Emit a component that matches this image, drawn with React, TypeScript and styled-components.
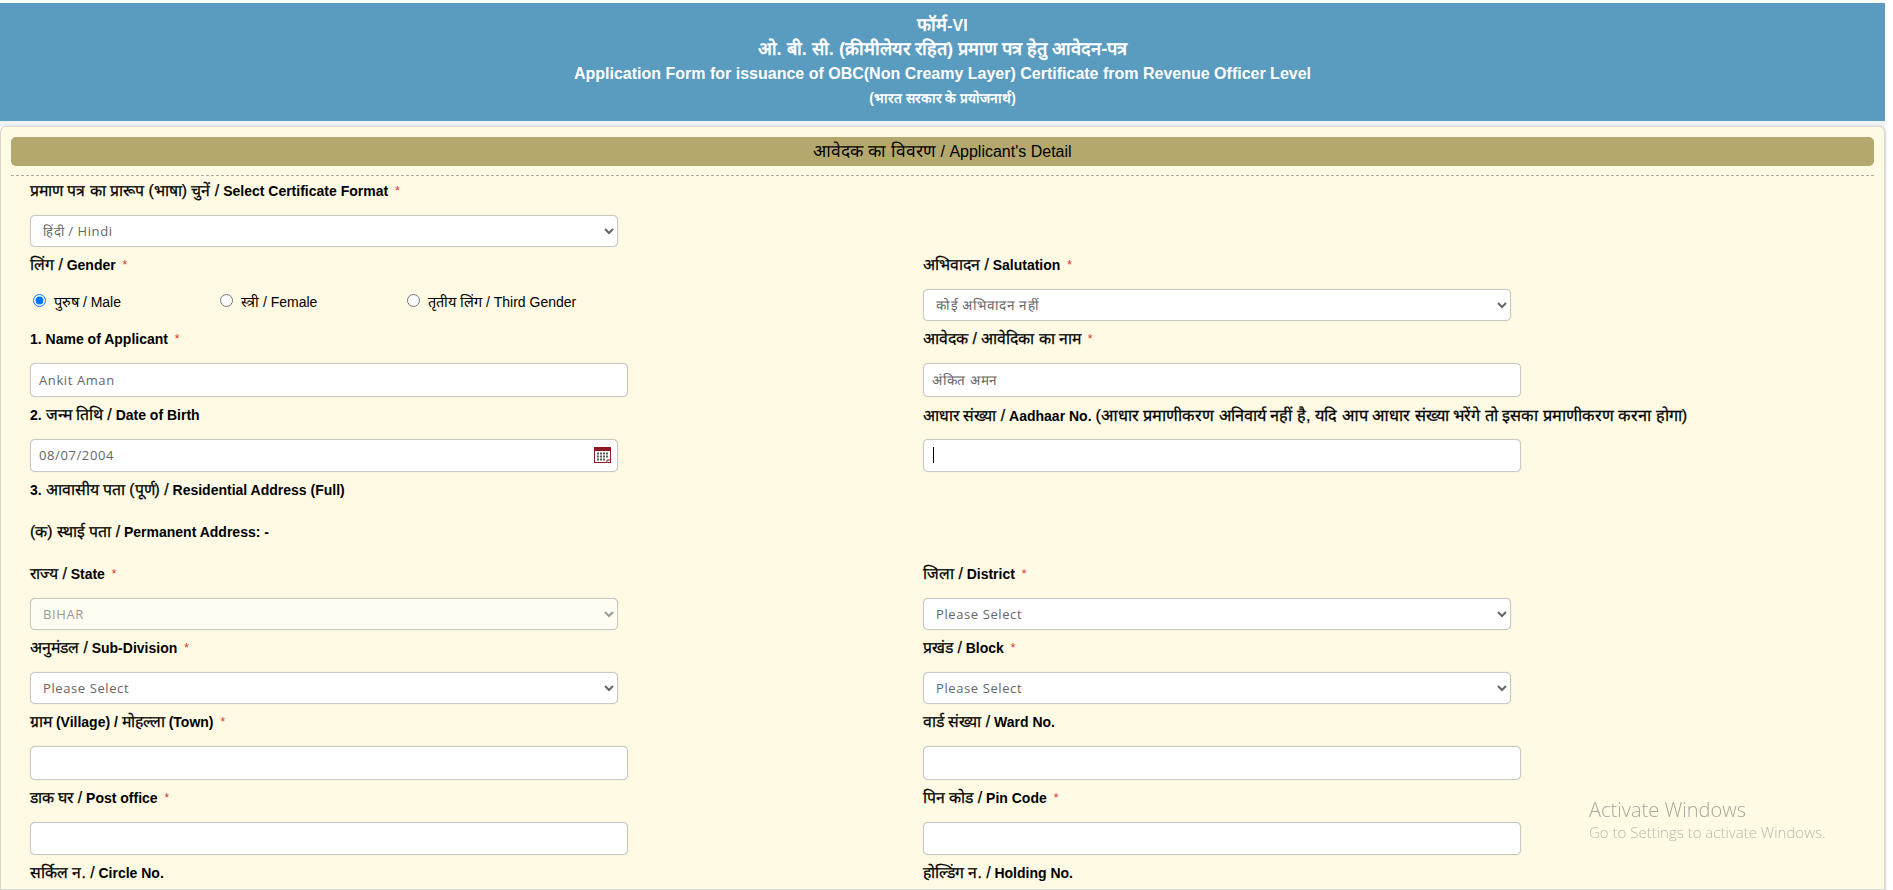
import React from 'react';
import styled, { createGlobalStyle } from 'styled-components';

const GlobalStyle = createGlobalStyle`
  html, body {
    margin: 0;
    height: 100%;
    overflow: hidden;
    background: #fff;
    font-family: "Liberation Sans", Arial, sans-serif;
    color: #000;
  }
`;

const Page = styled.div`
  width: 1885px;
  height: 890px;
  padding-top: 3px;
  box-sizing: border-box;
`;

const Header = styled.header`
  height: 118px;
  padding-top: 10px;
  box-sizing: border-box;
  background: #5a9bc0;
  color: #fff;
  text-align: center;
  font-weight: bold;
`;

const HeaderLine = styled.div`
  height: 24.4px;
  line-height: 24.4px;
  font-size: 16px;
`;

const HeaderHindi = styled.span<{ $small?: boolean }>`
  font-size: ${({ $small }) => ($small ? '13.8px' : '18.2px')};
`;

const Band = styled.div`
  height: 5px;
  background: #eef3f4;
`;

const Panel = styled.main`
  height: 764px;
  overflow: hidden;
  box-sizing: border-box;
  background: #fffae4;
  border: 1px solid #dcdad2;
  border-left-color: #d8d8d0;
  border-radius: 6px 6px 0 0;
  box-shadow: 1px 0 2px rgba(0, 0, 0, 0.18);
  padding: 10px 10px 0 10px;
`;

const SectionBar = styled.h2`
  margin: 0;
  height: 29px;
  line-height: 29px;
  border-radius: 5px;
  background: #b4a86f;
  font-size: 16px;
  font-weight: normal;
  text-align: center;
`;

const BarHindi = styled.span`
  font-size: 17.4px;
`;

const Divider = styled.div`
  margin-top: 9px;
  border-top: 1px dashed #aeaca2;
`;

const Rows = styled.div`
  padding: 5px 0 0 19px;
`;

const Row = styled.div`
  display: grid;
  grid-template-columns: 893px 1fr;
`;

const Field = styled.div`
  padding-bottom: 8px;
  min-width: 0;
`;

const Label = styled.label`
  display: block;
  height: 20px;
  line-height: 20px;
  margin-bottom: 14px;
  font-size: 14px;
  font-weight: bold;
  white-space: nowrap;
`;

const Hindi = styled.span<{ $long?: boolean }>`
  font-size: ${({ $long }) => ($long ? '16.3px' : '15.8px')};
  font-weight: normal;
  -webkit-text-stroke: 0.25px #000;
`;

const Required = styled.span`
  color: #d9302a;
  font-weight: normal;
  font-size: 12px;
  margin-left: 3px;
  position: relative;
  top: -1px;
`;

const controlStyles = `
  display: block;
  box-sizing: border-box;
  background: #fff;
  border: 1px solid #c9c9c6;
  border-radius: 5px;
  box-shadow: 0 0 1px rgba(0, 0, 0, 0.25);
  font-family: "Open Sans", "Liberation Sans", sans-serif;
  letter-spacing: 0.6px;
  color: #666;
  outline: none;
`;

const Select = styled.select<{ $size?: number }>`
  ${controlStyles}
  font-size: ${({ $size }) => $size ?? 13}px;
  width: 588px;
  height: 32px;
  padding: 0 5px 0 8px;

  &:disabled {
    background: #fffdf1;
    color: #999;
    opacity: 1;
  }
`;

const Input = styled.input<{ $wide?: boolean; $size?: number }>`
  ${controlStyles}
  font-size: ${({ $size }) => $size ?? 13}px;
  width: ${({ $wide }) => ($wide ? '597.5px' : '588px')};
  height: 33.5px;
  padding: 0 8px;
`;

const ControlWrap = styled.div`
  position: relative;
  width: fit-content;
`;

const CalendarButton = styled.span`
  position: absolute;
  right: 7px;
  top: 8px;
  display: flex;
`;

const Caret = styled.span`
  position: absolute;
  left: 10px;
  top: 8px;
  width: 1px;
  height: 16px;
  background: #000;
`;

const RadioGroup = styled.div`
  display: flex;
  height: 25px;
  align-items: center;
`;

const RadioOption = styled.label`
  display: flex;
  align-items: center;
  width: 187px;
  flex: none;
  white-space: nowrap;
  font-size: 14px;
  line-height: 23px;
  padding-top: 2px;

  input {
    width: 13px;
    height: 13px;
    margin: -4px 8px 0 3px;
  }
`;

const RadioText = styled.span`
  span {
    font-size: 14.5px;
  }
`;

const ActivationNotice = styled.div`
  position: fixed;
  left: 1589px;
  top: 797px;
  font-family: "Open Sans", sans-serif;
  font-weight: 300;
`;

const ActivationTitle = styled.div`
  font-size: 20px;
  line-height: 26px;
  color: #a9a89f;
`;

const ActivationHint = styled.div`
  font-size: 15px;
  line-height: 19px;
  color: #b9b8ae;
`;

const CalendarIcon = () => (
  <svg width="17" height="16" viewBox="0 0 17 16">
    <rect x="0.5" y="0.5" width="16" height="15" fill="#fff" stroke="#8c1a24" />
    <rect x="0" y="0" width="17" height="4" fill="#8c1a24" />
    {[6, 9, 12].map((y) =>
      [3, 6, 9, 12].map((x) => (
        <rect key={`${x}-${y}`} x={x} y={y - 0.5} width="2" height="2" fill={y === 12 && x === 12 ? '#fff' : '#5c5c54'} />
      )),
    )}
    <path d="M13 16v-3h4" fill="#fff" stroke="#8c1a24" />
  </svg>
);

const App = (): JSX.Element => (
  <Page>
    <GlobalStyle />
    <Header>
      <HeaderLine>
        <HeaderHindi>फॉर्म</HeaderHindi>-VI
      </HeaderLine>
      <HeaderLine>
        <HeaderHindi>ओ. बी. सी. (क्रीमीलेयर रहित) प्रमाण पत्र हेतु आवेदन-पत्र</HeaderHindi>
      </HeaderLine>
      <HeaderLine>Application Form for issuance of OBC(Non Creamy Layer) Certificate from Revenue Officer Level</HeaderLine>
      <HeaderLine>
        <HeaderHindi $small>(भारत सरकार के प्रयोजनार्थ)</HeaderHindi>
      </HeaderLine>
    </Header>
    <Band />
    <Panel>
      <SectionBar>
        <BarHindi>आवेदक का विवरण</BarHindi> / Applicant's Detail
      </SectionBar>
      <Divider />
      <Rows>
        <Row>
          <Field>
            <Label>
              <Hindi>प्रमाण पत्र का प्रारूप (भाषा) चुनें /</Hindi> Select Certificate Format <Required>*</Required>
            </Label>
            <Select defaultValue="hi">
              <option value="hi">हिंदी / Hindi</option>
            </Select>
          </Field>
        </Row>
        <Row>
          <Field>
            <Label>
              <Hindi>लिंग /</Hindi> Gender <Required>*</Required>
            </Label>
            <RadioGroup>
              <RadioOption>
                <input type="radio" name="gender" defaultChecked />
                <RadioText>
                  <span>पुरुष</span> / Male
                </RadioText>
              </RadioOption>
              <RadioOption>
                <input type="radio" name="gender" />
                <RadioText>
                  <span>स्त्री</span> / Female
                </RadioText>
              </RadioOption>
              <RadioOption>
                <input type="radio" name="gender" />
                <RadioText>
                  <span>तृतीय लिंग</span> / Third Gender
                </RadioText>
              </RadioOption>
            </RadioGroup>
          </Field>
          <Field>
            <Label>
              <Hindi>अभिवादन /</Hindi> Salutation <Required>*</Required>
            </Label>
            <Select $size={13.5} defaultValue="none">
              <option value="none">कोई अभिवादन नहीं</option>
            </Select>
          </Field>
        </Row>
        <Row>
          <Field>
            <Label>
              1. Name of Applicant <Required>*</Required>
            </Label>
            <Input $wide defaultValue="Ankit Aman" />
          </Field>
          <Field>
            <Label>
              <Hindi>आवेदक / आवेदिका का नाम</Hindi> <Required>*</Required>
            </Label>
            <Input $wide $size={13.5} defaultValue="अंकित अमन" />
          </Field>
        </Row>
        <Row>
          <Field>
            <Label>
              2. <Hindi>जन्म तिथि /</Hindi> Date of Birth
            </Label>
            <ControlWrap>
              <Input defaultValue="08/07/2004" />
              <CalendarButton>
                <CalendarIcon />
              </CalendarButton>
            </ControlWrap>
          </Field>
          <Field>
            <Label>
              <Hindi>आधार संख्या /</Hindi> Aadhaar No.{' '}
              <Hindi $long>(आधार प्रमाणीकरण अनिवार्य नहीं है, यदि आप आधार संख्या भरेंगे तो इसका प्रमाणीकरण करना होगा)</Hindi>
            </Label>
            <ControlWrap>
              <Input $wide />
              <Caret />
            </ControlWrap>
          </Field>
        </Row>
        <Row>
          <Field>
            <Label>
              3. <Hindi>आवासीय पता (पूर्ण) /</Hindi> Residential Address (Full)
            </Label>
          </Field>
        </Row>
        <Row>
          <Field>
            <Label>
              <Hindi>(क) स्थाई पता /</Hindi> Permanent Address: -
            </Label>
          </Field>
        </Row>
        <Row>
          <Field>
            <Label>
              <Hindi>राज्य /</Hindi> State <Required>*</Required>
            </Label>
            <Select disabled defaultValue="br">
              <option value="br">BIHAR</option>
            </Select>
          </Field>
          <Field>
            <Label>
              <Hindi>जिला /</Hindi> District <Required>*</Required>
            </Label>
            <Select defaultValue="">
              <option value="">Please Select</option>
            </Select>
          </Field>
        </Row>
        <Row>
          <Field>
            <Label>
              <Hindi>अनुमंडल /</Hindi> Sub-Division <Required>*</Required>
            </Label>
            <Select defaultValue="">
              <option value="">Please Select</option>
            </Select>
          </Field>
          <Field>
            <Label>
              <Hindi>प्रखंड /</Hindi> Block <Required>*</Required>
            </Label>
            <Select defaultValue="">
              <option value="">Please Select</option>
            </Select>
          </Field>
        </Row>
        <Row>
          <Field>
            <Label>
              <Hindi>ग्राम</Hindi> (Village) / <Hindi>मोहल्ला</Hindi> (Town) <Required>*</Required>
            </Label>
            <Input $wide />
          </Field>
          <Field>
            <Label>
              <Hindi>वार्ड संख्या /</Hindi> Ward No.
            </Label>
            <Input $wide />
          </Field>
        </Row>
        <Row>
          <Field>
            <Label>
              <Hindi>डाक घर /</Hindi> Post office <Required>*</Required>
            </Label>
            <Input $wide />
          </Field>
          <Field>
            <Label>
              <Hindi>पिन कोड /</Hindi> Pin Code <Required>*</Required>
            </Label>
            <Input $wide />
          </Field>
        </Row>
        <Row>
          <Field>
            <Label>
              <Hindi>सर्किल न. /</Hindi> Circle No.
            </Label>
          </Field>
          <Field>
            <Label>
              <Hindi>होल्डिंग न. /</Hindi> Holding No.
            </Label>
          </Field>
        </Row>
      </Rows>
    </Panel>
    <ActivationNotice>
      <ActivationTitle>Activate Windows</ActivationTitle>
      <ActivationHint>Go to Settings to activate Windows.</ActivationHint>
    </ActivationNotice>
  </Page>
);

export default App;
